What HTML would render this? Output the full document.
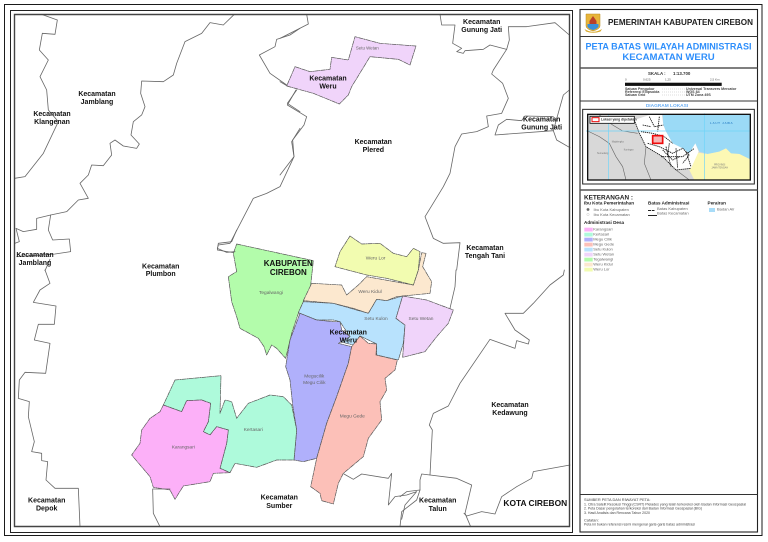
<!DOCTYPE html>
<html><head><meta charset="utf-8"><title>Peta Batas Wilayah Administrasi Kecamatan Weru</title>
<style>
html,body{margin:0;padding:0;background:#fff;width:768px;height:542px;overflow:hidden}
svg{display:block;position:absolute;left:0;top:0}
text{font-family:"Liberation Sans",sans-serif}
.k{font-size:7px;font-weight:bold;fill:#111;text-anchor:middle}
.v{font-size:4.8px;fill:#666;text-anchor:middle}
.l{font-size:4px;fill:#666}
.b{font-size:4.6px;font-weight:bold;fill:#222}
.f{font-size:3.9px;fill:#444}
.bd{fill:none;stroke:#666;stroke-width:2.4;stroke-linejoin:round;stroke-linecap:round}
.p{stroke:#555;stroke-width:2.1;stroke-linejoin:round;stroke-dasharray:14 1 4 1}
</style></head><body>
<svg width="768" height="542" viewBox="0 0 768 542" xmlns="http://www.w3.org/2000/svg">
<rect width="768" height="542" fill="#fff"/>

<!-- village polygons -->
<g transform="translate(120 230) scale(.33333)">
<polygon class="p" fill="#b3fcab" points="350,42 580,92 570,185 550,215 535,250 515,310 497,385 470,355 455,345 440,375 432,350 415,325 360,295 350,260 335,215 325,140 350,125 340,70"/>
<polygon class="p" fill="#fce8cf" points="575,160 665,165 680,195 715,165 740,140 880,165 895,120 905,68 918,70 908,110 935,155 930,190 850,198 830,200 800,212 770,208 745,250 700,235 640,220 550,212"/>
<polygon class="p" fill="#f2fcb0" points="690,18 725,42 780,40 820,70 860,80 880,55 900,65 895,120 880,165 800,145 740,135 645,110 660,65"/>
<polygon class="p" fill="#b8e2fd" points="550,215 640,220 745,250 770,208 800,212 848,198 828,265 855,285 850,340 835,390 770,375 770,342 720,318 700,345 660,335 690,320 660,275 640,270 590,270 535,248"/>
<polygon class="p" fill="#b0b0fb" points="540,250 590,270 640,275 660,275 665,300 690,320 655,340 695,350 685,400 650,500 620,580 590,685 550,695 522,690 530,600 518,525 510,450 497,410 510,330"/>
<polygon class="p" fill="#fcc0b8" points="720,318 745,340 770,342 768,375 832,390 825,420 795,445 800,480 780,515 785,570 745,625 730,680 670,730 655,760 640,822 605,812 600,790 572,770 590,685 620,580 650,500 685,400 695,350"/>
<polygon class="p" fill="#f0d4fa" points="848,198 920,210 1000,240 985,280 950,320 915,365 848,382 855,285 828,265"/>
<polygon class="p" fill="#aefadb" points="165,450 303,437 300,550 315,510 335,515 350,565 385,520 450,495 490,500 515,525 530,600 522,690 470,690 410,712 345,700 330,728 300,715 320,640 325,600 290,590 270,615 250,605 265,575 272,520 245,510 200,512 185,545 130,525"/>
<polygon class="p" fill="#fcb0f8" points="130,525 185,545 200,512 245,510 272,520 265,575 250,605 270,615 290,590 325,600 320,640 300,715 330,728 280,730 270,755 190,768 165,808 150,780 100,772 90,740 35,675 60,640 65,600 90,565 120,545"/>
<polyline class="bd" points="672,732 700,748 725,732 805,745 815,730 805,825 825,800 860,795 890,785 855,825 845,868"/>
<polyline class="bd" points="350,0 335,35 295,40 292,60 340,68"/>
</g>

<g transform="scale(.33333)">
<polyline class="bd" points="125,43 172,60 165,103 127,100 118,150 145,180 120,230 140,270 145,330 175,365 130,460 75,530 44,535"/>
<polyline class="bd" points="703,43 670,75 630,68 605,100 555,125 530,190 520,225 490,245 425,243 422,280 435,320 425,345 400,365 393,405 418,432 410,445 370,438 345,420 330,430 335,465 310,497 275,495 265,525 240,550 265,595 235,600 200,635 152,645 110,655 110,688 70,695 48,685 58,725 44,730"/>
<polyline class="bd" points="152,645 145,690 158,720 208,717 212,755 165,762 50,770"/>
<polyline class="bd" points="150,778 135,812"/>
<polyline class="bd" points="900,85 870,105 830,118 825,140 778,165 810,220 860,255"/>
<polyline class="bd" points="890,270 862,310 900,335"/>
<polyline class="bd" points="900,385 875,425 882,470 840,560 800,580 760,595 690,730 655,735 652,745 680,757 705,755"/>
</g>

<g transform="translate(280 0) scale(.33333)">
<polygon class="p" fill="#f0d4fa" points="45,200 90,215 150,208 155,172 205,180 225,110 300,130 408,138 390,195 355,178 270,170 215,260 205,285 178,312 100,280 20,258"/>
<polyline class="bd" points="80,43 85,72 40,95 0,115"/>
<polyline class="bd" points="0,245 22,258"/>
<polyline class="bd" points="48,270 22,315 80,350 72,375 38,420 42,470 0,525"/>
<polyline class="bd" points="480,43 485,75 525,75 518,130 545,145 530,155 550,160 555,152 610,148 630,135 680,148 640,210 635,222 668,250 685,295 665,340 620,348 625,380 590,395 545,402 525,440 510,520 490,560 435,650 460,715 490,730 540,728 530,810"/>
<polyline class="bd" points="680,148 688,120 685,80 740,80 825,68 868,105"/>
<polyline class="bd" points="868,270 850,285 820,392 830,420 870,443"/>
<polyline class="bd" points="820,392 645,405 655,375 680,358 725,362 735,348 820,350"/>
</g>

<g transform="translate(400 270) scale(.33333)">
<polyline class="bd" points="168,0 165,50 150,115"/>
<polyline class="bd" points="493,0 490,15 450,45 400,100 370,130 315,130 345,180 388,210 385,222 350,212 345,235 270,208 180,340 145,408 100,430 88,465 97,480 90,615 65,612 60,630 60,660 50,690 5,725 0,770"/>
<polyline class="bd" points="90,615 170,625 215,645 195,730 212,770"/>
<polyline class="bd" points="192,730 200,738 245,725 285,732 305,680 350,650 395,625 400,605 510,585"/>
<polyline class="bd" points="60,660 20,665 0,680"/>
</g>

<g transform="translate(0 270) scale(.33333)">
<polyline class="bd" points="135,0 150,40 120,60 100,97 168,108 163,163 115,163 103,210 150,220 137,310 75,307 58,330 55,385 88,395 85,440 103,515 95,545 125,550 125,572 143,575 138,630 165,655 235,655 240,770"/>
<polyline class="bd" points="510,657 458,657 460,730 480,770"/>
</g>

<!-- district labels -->
<g>
<text class="k" x="97" y="96">Kecamatan</text><text class="k" x="97" y="104">Jamblang</text>
<text class="k" x="52" y="116">Kecamatan</text><text class="k" x="52" y="124">Klangenan</text>
<text class="k" x="35" y="257">Kecamatan</text><text class="k" x="35" y="265">Jamblang</text>
<text class="k" x="160.7" y="268.5">Kecamatan</text><text class="k" x="160.7" y="276">Plumbon</text>
<text class="k" x="328" y="80.5">Kecamatan</text><text class="k" x="328" y="88.5">Weru</text>
<text class="k" x="481.7" y="24">Kecamatan</text><text class="k" x="481.7" y="32">Gunung Jati</text>
<text class="k" x="541.7" y="121.5">Kecamatan</text><text class="k" x="541.7" y="129.5">Gunung Jati</text>
<text class="k" x="373.3" y="144">Kecamatan</text><text class="k" x="373.3" y="152">Plered</text>
<text class="k" x="485" y="250">Kecamatan</text><text class="k" x="485" y="258">Tengah Tani</text>
<text class="k" x="510" y="407">Kecamatan</text><text class="k" x="510" y="415">Kedawung</text>
<text class="k" x="46.7" y="502.5">Kecamatan</text><text class="k" x="46.7" y="510.5">Depok</text>
<text class="k" x="279.3" y="499.5">Kecamatan</text><text class="k" x="279.3" y="508">Sumber</text>
<text class="k" x="437.7" y="502.5">Kecamatan</text><text class="k" x="437.7" y="511">Talun</text>
<text class="k" x="348.3" y="334.5">Kecamatan</text><text class="k" x="348.3" y="342.5">Weru</text>
<text class="k" x="288.3" y="266" style="font-size:8px">KABUPATEN</text><text class="k" x="288.3" y="275" style="font-size:8px">CIREBON</text>
<text class="k" x="535.3" y="505.8" style="font-size:8.4px">KOTA CIREBON</text>
</g>
<g>
<text class="v" x="271" y="294">Tegalwangi</text>
<text class="v" x="375.6" y="259.7">Weru Lor</text>
<text class="v" x="370" y="293">Weru Kidul</text>
<text class="v" x="376" y="320">Setu Kulon</text>
<text class="v" x="421" y="320">Setu Wetan</text>
<text class="v" x="314.3" y="377.5">Megucilik</text>
<text class="v" x="314.3" y="384">Megu Cilik</text>
<text class="v" x="352.3" y="417.7">Megu Gede</text>
<text class="v" x="253.3" y="431">Kertasari</text>
<text class="v" x="183.3" y="448.3">Karangsari</text>
<text class="v" x="367.3" y="49.7" style="font-size:4.4px">Setu Wetan</text>
</g>

<!-- frames -->
<rect x="4.5" y="4.5" width="757.5" height="531" fill="none" stroke="#1a1a1a" stroke-width="1"/>
<path d="M10.5 532.5V10.5H572.5V532.5Z" fill="none" stroke="#222" stroke-width="1"/>
<path d="M14.5 526.5V14.5H569.5V526.5Z" fill="none" stroke="#444" stroke-width="1.4"/>

<!-- right panel -->
<rect x="580" y="9.5" width="177.5" height="522.5" fill="#fff" stroke="#222" stroke-width="1.1"/>
<path d="M580 36.5H757.5M580 101H757.5M580 494.5H757.5" stroke="#333" stroke-width="1" fill="none"/>
<path d="M580 68H757.5M580 190H757.5" stroke="#555" stroke-width="1.4" fill="none"/>

<!-- logo -->
<g>
<path d="M586 14H600V26Q600 29 593 31Q586 29 586 26Z" fill="#e8b53a" stroke="#b88a1e" stroke-width=".5"/>
<path d="M587.5 24H598.5V27Q596 29.5 593 30Q590 29.5 587.5 27Z" fill="#3a8fd8"/>
<path d="M589.5 24V21L593 16L596.5 21V24Z" fill="#b8402a"/>
<path d="M584.5 29Q593 34.5 602 29L600.5 31.5Q593 34 586 31.5Z" fill="#d8a92c"/>
</g>
<text x="608" y="25.2" font-size="8.4" font-weight="bold" fill="#222" textLength="145" lengthAdjust="spacingAndGlyphs">PEMERINTAH KABUPATEN CIREBON</text>
<text x="668.5" y="49.7" font-size="9.6" font-weight="bold" fill="#2f8ffb" text-anchor="middle" textLength="166" lengthAdjust="spacingAndGlyphs">PETA BATAS WILAYAH ADMINISTRASI</text>
<text x="668.5" y="60" font-size="9.6" font-weight="bold" fill="#2f8ffb" text-anchor="middle">KECAMATAN WERU</text>

<!-- scale -->
<text x="648" y="75" font-size="4.4" font-weight="bold" fill="#333">SKALA :</text>
<text x="673" y="75" font-size="4.4" font-weight="bold" fill="#333">1:13.700</text>
<rect x="625" y="82.7" width="96.7" height="3.2" fill="#111"/>
<g font-size="3" fill="#555">
<text x="625" y="80.5">0</text><text x="643" y="80.5">0,625</text><text x="665" y="80.5">1,25</text><text x="710" y="80.5">2,5 Km</text>
</g>
<g font-size="3.6" fill="#444" font-weight="bold">
<text x="625" y="90">Satuan Pengukur</text><text x="625" y="93">Referensi Ellipsoida</text><text x="625" y="96">Satuan Grid</text>
<text x="686" y="90">Universal Transvers Mercator</text><text x="686" y="93">WGS 84</text><text x="686" y="96">UTM Zona 49S</text>
</g>
<path d="M662 89H685M662 92H685M662 95H685" stroke="#bbb" stroke-width=".5" stroke-dasharray="1 1"/>

<text x="667" y="107" font-size="4.8" font-weight="bold" fill="#6aaef5" text-anchor="middle">DIAGRAM LOKASI</text>

<!-- locator -->
<g transform="translate(576 0) scale(.33333)">
<rect x="20" y="328" width="515" height="224" fill="#fff" stroke="#222" stroke-width="3"/>
<rect x="35" y="343" width="488" height="197" fill="#d8d8d8"/>
<polygon fill="#9bdaf6" points="260,345 523,345 523,478 490,462 465,460 450,445 430,455 395,462 370,455 358,430 340,460 320,445 290,430 270,395 262,375"/>
<polygon fill="#fcf8b4" points="523,478 490,462 465,460 450,445 430,455 395,462 365,458 340,510 355,540 523,540"/>
<polygon fill="#fff" points="175,360 220,345 258,345 262,375 270,395 290,430 320,445 340,460 358,430 368,455 345,505 300,510 260,470 210,440 190,400"/>
<g fill="none" stroke="#111" stroke-width="2.6" stroke-dasharray="4 2">
<polyline points="175,360 190,400 210,440 260,470 300,510 345,505"/>
<polyline points="220,350 235,380 262,375"/>
<polyline points="195,395 230,400 265,410 290,430"/>
<polyline points="215,430 250,440 290,460 320,445 340,465 320,490"/>
<polyline points="260,450 290,480 310,470"/>
<polyline points="200,375 225,380"/>
<polyline points="250,350 245,395"/>
<polyline points="270,440 285,500"/>
<polyline points="300,445 305,505"/>
<polyline points="330,455 345,500"/>
<polyline points="255,470 320,470 355,445"/>
<polyline points="280,430 275,465"/>
</g>
<g fill="none" stroke="#666" stroke-width="1.8">
<polyline points="35,393 70,410 100,430 120,470 140,500 150,540"/>
<polyline points="70,345 110,375 140,393 185,400"/>
<polyline points="210,440 205,490 225,540"/>
<polyline points="300,510 340,540"/>
</g>
<path d="M30 393H523M97 345V540M385 340V540" stroke="#6fd4f8" stroke-width="2" fill="none"/>
<rect x="35" y="343" width="488" height="197" fill="none" stroke="#111" stroke-width="4"/>
<rect x="230" y="407" width="30" height="23" fill="#f6b6b6" stroke="#ee0a0a" stroke-width="5"/>
<rect x="42" y="349" width="133" height="21" fill="#fff" stroke="#111" stroke-width="2.5"/>
<rect x="48" y="353" width="21" height="12" fill="#fff" stroke="#ee0a0a" stroke-width="3"/>
<text x="75" y="362" font-size="10" font-weight="bold" fill="#333">Lokasi yang dipetakan</text>
<text x="437" y="372" font-size="9" font-weight="bold" fill="#3a8ccc" text-anchor="middle" letter-spacing="2">LAUT JAWA</text>
<text x="431" y="497" font-size="7" fill="#777" text-anchor="middle">PROVINSI</text>
<text x="431" y="505" font-size="7" fill="#777" text-anchor="middle">JAWA TENGAH</text>
<text x="125" y="428" font-size="7" fill="#777" text-anchor="middle">Majalengka</text>
<text x="158" y="452" font-size="7" fill="#777" text-anchor="middle">Kuningan</text>
<text x="80" y="462" font-size="7" fill="#777" text-anchor="middle">Sumedang</text>
</g>

<!-- legend -->
<text x="584" y="199.5" font-size="6.4" font-weight="bold" fill="#222">KETERANGAN :</text>
<text class="b" x="584" y="204.5">Ibu Kota Pemerintahan</text>
<text class="b" x="648" y="204.5">Batas Administrasi</text>
<text class="b" x="707.5" y="204.5">Perairan</text>
<circle cx="588" cy="209.5" r="1.4" fill="#666"/>
<circle cx="588" cy="214.5" r="1.2" fill="#fff" stroke="#ccc" stroke-width=".5"/>
<text class="l" x="593.5" y="211">Ibu Kota Kabupaten</text>
<text class="l" x="593.5" y="216">Ibu Kota Kecamatan</text>
<path d="M648 210.5H654.5" stroke="#222" stroke-width="1" stroke-dasharray="3 .8"/>
<path d="M648 215.5H657" stroke="#222" stroke-width="1"/>
<text class="l" x="657" y="210">Batas Kabupaten</text>
<text class="l" x="657" y="214.5">Batas Kecamatan</text>
<rect x="709" y="208" width="6" height="4" fill="#a8dcf8"/>
<text class="l" x="717" y="210.5">Badan Air</text>
<text class="b" x="584" y="224">Administrasi Desa</text>
<g>
<rect x="584.3" y="227.7" width="8.4" height="3.8" fill="#fcb0f8"/><text class="l" x="593.2" y="230.5">Karangsari</text>
<rect x="584.3" y="232.7" width="8.4" height="3.8" fill="#aefadb"/><text class="l" x="593.2" y="235.5">Kertasari</text>
<rect x="584.3" y="237.7" width="8.4" height="3.8" fill="#b0b0fb"/><text class="l" x="593.2" y="240.5">Megu Cilik</text>
<rect x="584.3" y="242.7" width="8.4" height="3.8" fill="#fcc0b8"/><text class="l" x="593.2" y="245.5">Megu Gede</text>
<rect x="584.3" y="247.7" width="8.4" height="3.8" fill="#b8e2fd"/><text class="l" x="593.2" y="250.5">Setu Kulon</text>
<rect x="584.3" y="252.7" width="8.4" height="3.8" fill="#f0d4fa"/><text class="l" x="593.2" y="255.5">Setu Wetan</text>
<rect x="584.3" y="257.7" width="8.4" height="3.8" fill="#b3fcab"/><text class="l" x="593.2" y="260.5">Tegalwangi</text>
<rect x="584.3" y="262.7" width="8.4" height="3.8" fill="#fce8cf"/><text class="l" x="593.2" y="265.5">Weru Kidul</text>
<rect x="584.3" y="267.7" width="8.4" height="3.8" fill="#f2fcb0"/><text class="l" x="593.2" y="270.5">Weru Lor</text>
</g>

<!-- footer -->
<text class="f" x="584" y="500.8">SUMBER PETA DAN RIWAYAT PETA:</text>
<text class="f" x="584" y="505.5" textLength="162" lengthAdjust="spacingAndGlyphs">1. Citra Satelit Resolusi Tinggi (CSRT) Pleiades yang telah terkoreksi oleh Badan Informasi Geospasial</text>
<text class="f" x="584" y="509.5" textLength="118" lengthAdjust="spacingAndGlyphs">2. Peta Dasar pengolahan terkoreksi dari Badan Informasi Geospasial (BIG)</text>
<text class="f" x="584" y="514" textLength="66" lengthAdjust="spacingAndGlyphs">3. Hasil Analisis dan Rencana Tahun 2020</text>
<text class="f" x="584" y="521.5">Catatan:</text>
<text class="f" x="584" y="525.5" textLength="111" lengthAdjust="spacingAndGlyphs">Peta ini bukan referensi resmi mengenai garis-garis batas administrasi</text>
</svg>
</body></html>
